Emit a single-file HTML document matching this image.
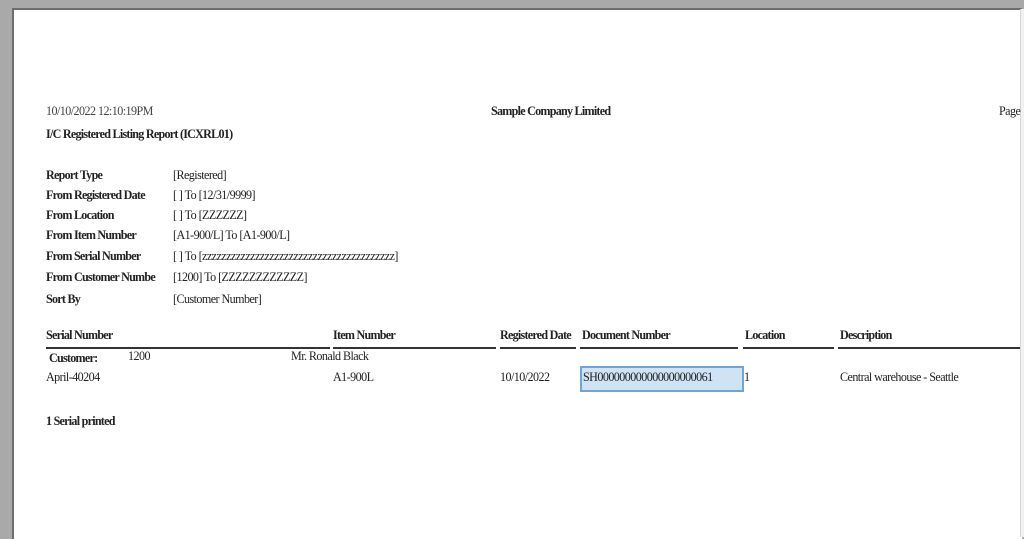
<!DOCTYPE html>
<html><head><style>
body{margin:0;width:1024px;height:537px;overflow:hidden;background:#a9a9a9;position:relative;font-family:"Liberation Serif",serif;font-size:13px;color:#222;}
#pg{position:absolute;left:12px;top:8px;width:1008px;height:529px;background:#fff;border-left:2px solid #6e6e6e;border-top:2px solid #6e6e6e;}
#rb{position:absolute;left:1020px;top:9px;width:4px;height:528px;background:#f2f2f2;border-left:1px solid #d8d8d8}
.t{position:absolute;white-space:nowrap;letter-spacing:-0.6px;transform:scaleX(0.93);transform-origin:left top;}
.b{font-weight:bold;letter-spacing:-0.8px}
.l{position:absolute;top:347px;height:2px;background:#333}
</style></head><body>
<div id="pg"></div><div id="rb"></div>
<div class="t" style="left:46px;top:103px;color:#444">10/10/2022 12:10:19PM</div>
<div class="t b" style="left:491px;top:103px">Sample Company Limited</div>
<div class="t" style="left:999px;top:103px">Page</div>
<div class="t b" style="left:46px;top:126px">I/C Registered Listing Report (ICXRL01)</div>

<div class="t b" style="left:46px;top:167px">Report Type</div>
<div class="t b" style="left:46px;top:187px">From Registered Date</div>
<div class="t b" style="left:46px;top:207px">From Location</div>
<div class="t b" style="left:46px;top:227px">From Item Number</div>
<div class="t b" style="left:46px;top:248px">From Serial Number</div>
<div class="t b" style="left:46px;top:269px">From Customer Numbe</div>
<div class="t b" style="left:46px;top:291px">Sort By</div>

<div class="t" style="left:173px;top:167px">[Registered]</div>
<div class="t" style="left:173px;top:187px">[ ] To [12/31/9999]</div>
<div class="t" style="left:173px;top:207px">[ ] To [ZZZZZZ]</div>
<div class="t" style="left:173px;top:227px">[A1-900/L] To [A1-900/L]</div>
<div class="t" style="left:173px;top:248px">[ ] To [zzzzzzzzzzzzzzzzzzzzzzzzzzzzzzzzzzzzzzzz]</div>
<div class="t" style="left:173px;top:269px">[1200] To [ZZZZZZZZZZZZ]</div>
<div class="t" style="left:173px;top:291px">[Customer Number]</div>

<div class="t b" style="left:46px;top:327px">Serial Number</div>
<div class="t b" style="left:333px;top:327px">Item Number</div>
<div class="t b" style="left:500px;top:327px">Registered Date</div>
<div class="t b" style="left:582px;top:327px">Document Number</div>
<div class="t b" style="left:745px;top:327px">Location</div>
<div class="t b" style="left:840px;top:327px">Description</div>
<div class="l" style="left:46px;width:284px"></div>
<div class="l" style="left:333px;width:163px"></div>
<div class="l" style="left:500px;width:76px"></div>
<div class="l" style="left:580px;width:158px"></div>
<div class="l" style="left:743px;width:91px"></div>
<div class="l" style="left:838px;width:182px"></div>

<div class="t b" style="left:49px;top:350px">Customer:</div>
<div class="t" style="left:128px;top:348px">1200</div>
<div class="t" style="left:291px;top:348px">Mr. Ronald Black</div>
<div class="t" style="left:46px;top:369px">April-40204</div>
<div class="t" style="left:333px;top:369px">A1-900L</div>
<div class="t" style="left:500px;top:369px">10/10/2022</div>
<div style="position:absolute;left:580px;top:366px;width:160px;height:22px;background:#cfe3f5;border:2px solid #6aa6dc"></div>
<div class="t" style="left:583px;top:369px">SH000000000000000000061</div>
<div class="t" style="left:744px;top:369px">1</div>
<div class="t" style="left:840px;top:369px">Central warehouse - Seattle</div>
<div class="t b" style="left:46px;top:413px">1 Serial printed</div>
</body></html>
